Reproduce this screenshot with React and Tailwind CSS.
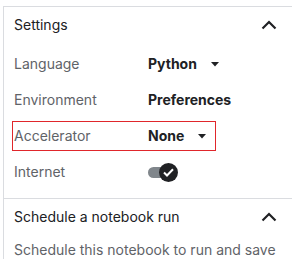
import React from 'react';

const ChevronUp = () => (
  <svg width="16" height="10" viewBox="0 0 16 10" className="text-[#202124]">
    <polyline points="1.5,8.5 8,2 14.5,8.5" fill="none" stroke="currentColor" strokeWidth="2.2" />
  </svg>
);

const DropArrow = () => (
  <svg width="8" height="5" viewBox="0 0 8 5" className="ml-[14px] text-[#202124]">
    <polygon points="0,0 8,0 4,4.5" fill="currentColor" />
  </svg>
);

const Toggle = () => (
  <div className="relative h-[19px] w-[31px]">
    <div className="absolute left-0 top-[4px] h-[11px] w-[26px] rounded-full bg-[#80868b]" />
    <div className="absolute left-[11px] top-0 flex h-[19px] w-[19px] items-center justify-center rounded-full bg-[#202124]">
      <svg width="11" height="9" viewBox="0 0 11 9">
        <polyline points="1,4.5 4,7.5 10,1.2" fill="none" stroke="#fff" strokeWidth="2" />
      </svg>
    </div>
  </div>
);

const Row = ({ label, children, highlight }) => (
  <div
    className={
      'mx-[8px] flex h-[30px] w-[204px] items-center whitespace-nowrap border pl-[1px] ' +
      (highlight ? 'border-[#e0262b]' : 'border-transparent')
    }
  >
    <div className="w-[134px] shrink-0 text-[#5f6368]">{label}</div>
    <div className="flex shrink-0 items-center font-bold text-[#202124]">{children}</div>
  </div>
);

const SectionHeader = ({ title }) => (
  <div className="flex h-9 items-center justify-between pl-[10px] pr-[15px] text-[#202124]">
    <span>{title}</span>
    <ChevronUp />
  </div>
);

export default function App() {
  return (
    <div
      className="h-[259px] w-[292px] overflow-hidden bg-white pl-[3px] pt-[6px] text-[14px] leading-5"
      style={{ fontFamily: 'Inter, "Noto Sans", sans-serif' }}
    >
      <div className="h-full border-l border-t border-[#dadce0]">
        <div className="pb-[11px]">
          <SectionHeader title="Settings" />
          <div className="mt-[6px] flex flex-col gap-[6px]">
            <Row label="Language">
              Python
              <DropArrow />
            </Row>
            <Row label="Environment">Preferences</Row>
            <Row label="Accelerator" highlight>
              None
              <DropArrow />
            </Row>
            <Row label="Internet">
              <Toggle />
            </Row>
          </div>
        </div>
        <div className="border-t border-[#dadce0]">
          <SectionHeader title="Schedule a notebook run" />
          <div className="mt-[5px] whitespace-nowrap pl-[10px] text-[#5f6368]">
            Schedule this notebook to run and save
          </div>
        </div>
      </div>
    </div>
  );
}
